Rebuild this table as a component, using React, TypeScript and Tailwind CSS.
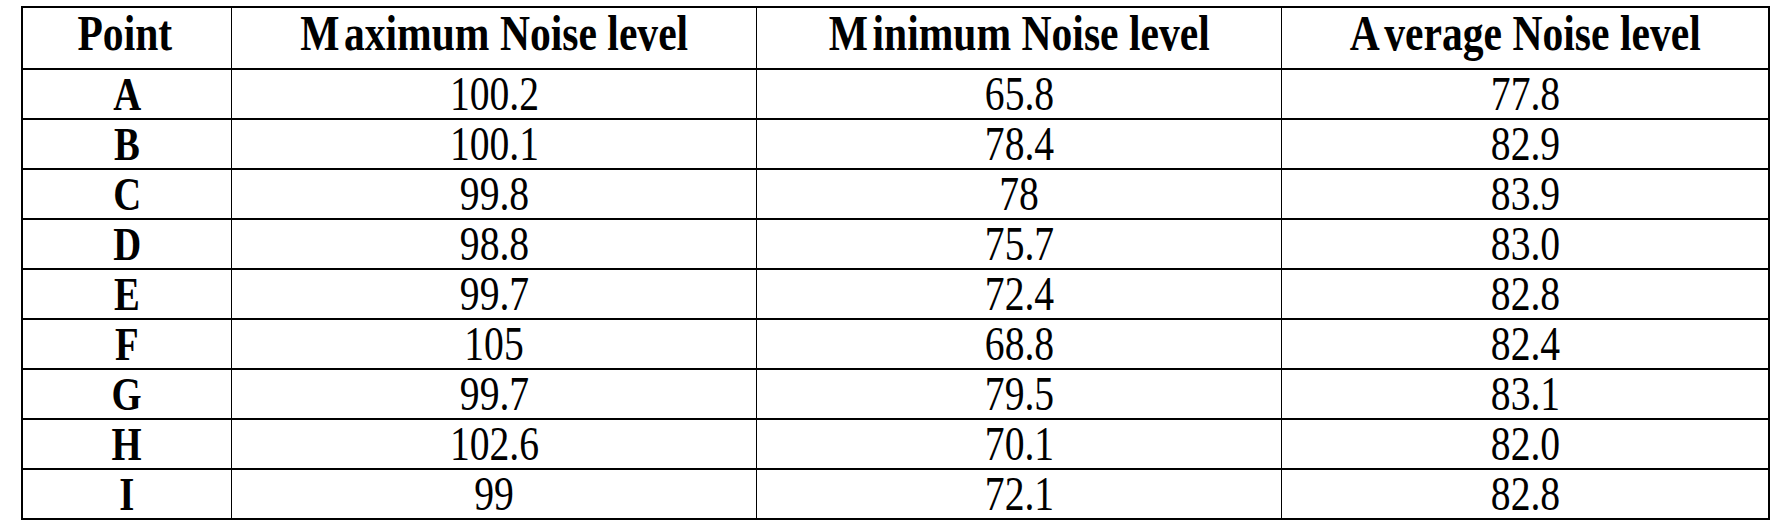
import React from "react";

const rows: [string, string, string, string][] = [
  ["A", "100.2", "65.8", "77.8"],
  ["B", "100.1", "78.4", "82.9"],
  ["C", "99.8", "78", "83.9"],
  ["D", "98.8", "75.7", "83.0"],
  ["E", "99.7", "72.4", "82.8"],
  ["F", "105", "68.8", "82.4"],
  ["G", "99.7", "79.5", "83.1"],
  ["H", "102.6", "70.1", "82.0"],
  ["I", "99", "72.1", "82.8"],
];

// header label with the odd gap after the first letter, as in the scan
const Head = ({ first, rest }: { first: string; rest: string }) => (
  <div className="flex h-[60px] items-start justify-center bg-white">
    <span className="inline-block origin-top scale-x-[0.885] scale-y-[1.08] whitespace-nowrap text-[47px] font-bold leading-[46px]">
      <span className="mr-[5px]">{first}</span>
      {rest}
    </span>
  </div>
);

const Cell = ({ children, bold }: { children: React.ReactNode; bold?: boolean }) => (
  <div className="flex h-[48px] items-start justify-center bg-white">
    <span
      className={
        bold
          ? "inline-block scale-x-[0.86] scale-y-[1.05] text-[45px] font-bold leading-[48px]"
          : "inline-block scale-x-[0.9] scale-y-[1.12] text-[44px] leading-[48px]"
      }
    >
      {children}
    </span>
  </div>
);

export default function App() {
  return (
    <div
      className="h-[525px] w-[1786px] overflow-hidden bg-white pl-[21px] pt-[6px] text-black"
      style={{ fontFamily: '"Liberation Serif", "Times New Roman", serif' }}
    >
      <div className="grid w-[1749px] grid-cols-[208px_524px_524px_486px] gap-x-px gap-y-[2px] border-2 border-black bg-black">
        <Head first="Point" rest="" />
        <Head first="M" rest="aximum Noise level" />
        <Head first="M" rest="inimum Noise level" />
        <Head first="A" rest="verage Noise level" />
        {rows.map((r) => (
          <React.Fragment key={r[0]}>
            <Cell bold>{r[0]}</Cell>
            <Cell>{r[1]}</Cell>
            <Cell>{r[2]}</Cell>
            <Cell>{r[3]}</Cell>
          </React.Fragment>
        ))}
      </div>
    </div>
  );
}
